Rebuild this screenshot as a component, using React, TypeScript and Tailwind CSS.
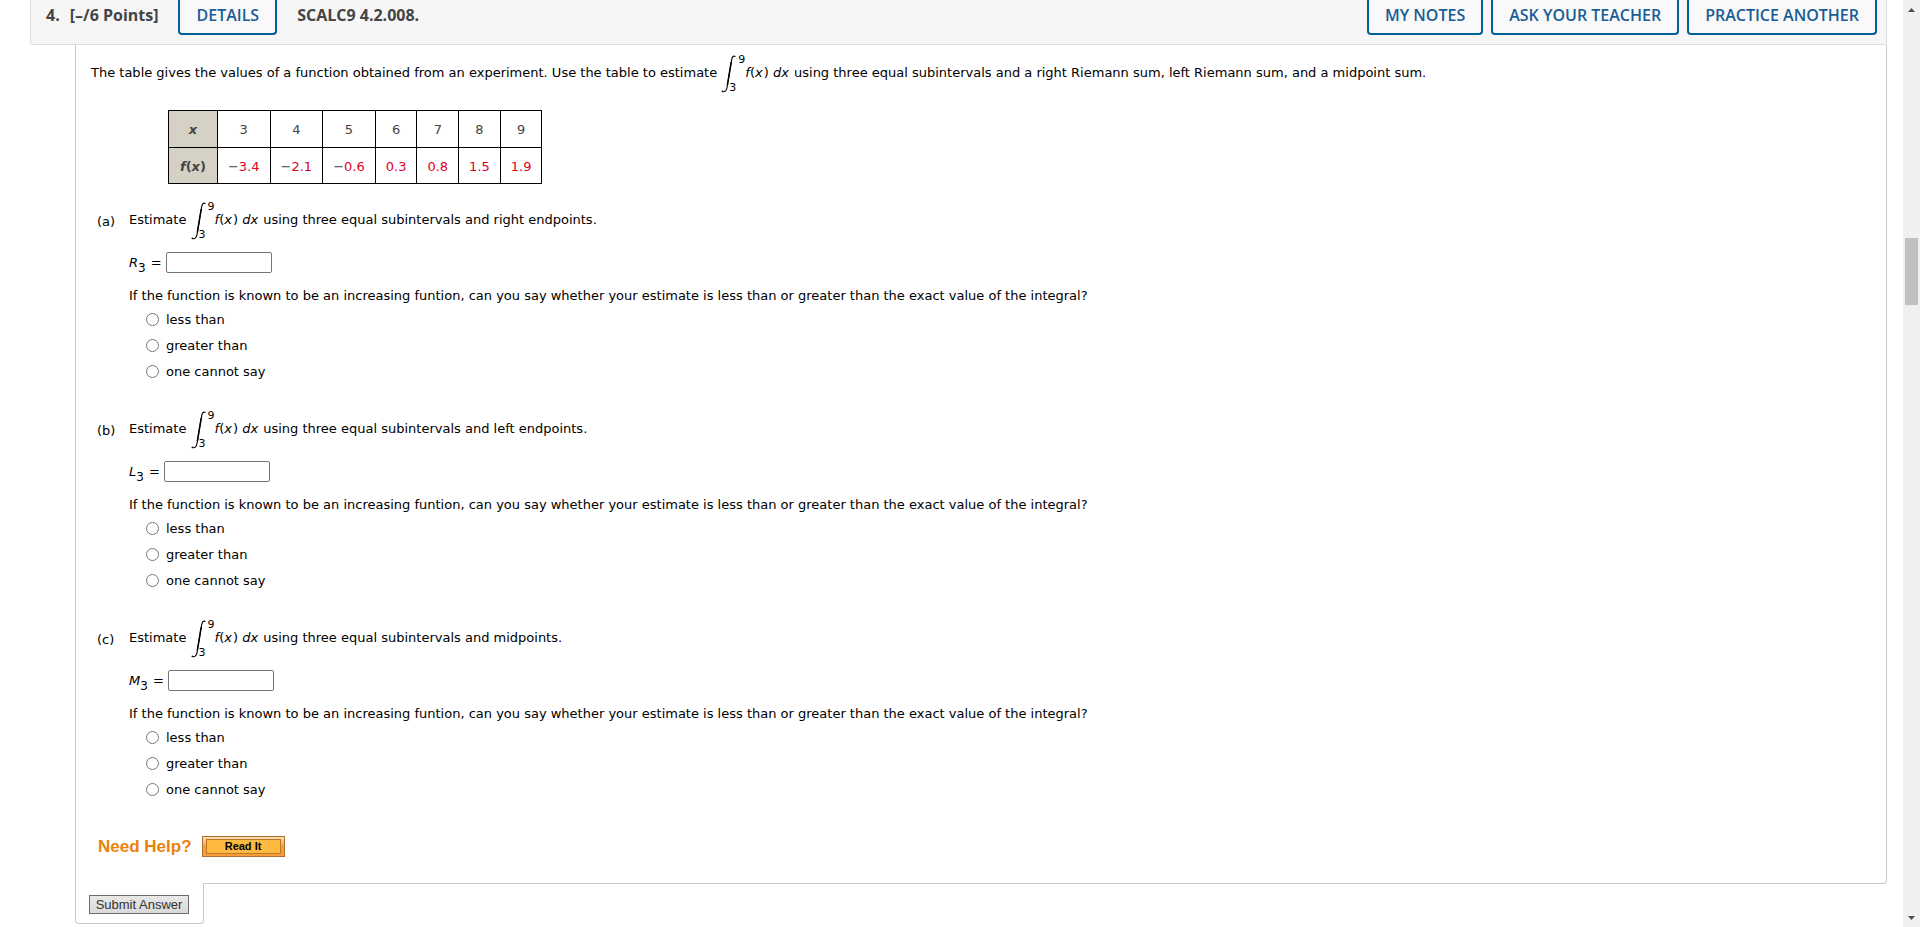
interface Part {
  id: string;
  symbol: string;
  method: string;
}

const PARTS: Part[] = [
  { id: 'a', symbol: 'R', method: 'right endpoints' },
  { id: 'b', symbol: 'L', method: 'left endpoints' },
  { id: 'c', symbol: 'M', method: 'midpoints' },
];

const CHOICES = ['less than', 'greater than', 'one cannot say'];

const DATA = [
  { x: 3, fx: -3.4 },
  { x: 4, fx: -2.1 },
  { x: 5, fx: -0.6 },
  { x: 6, fx: 0.3 },
  { x: 7, fx: 0.8 },
  { x: 8, fx: 1.5 },
  { x: 9, fx: 1.9 },
];

const OUTLINE_BUTTON =
  'h-[35px] rounded-b border-2 border-t-0 border-[#006298] bg-[#f9f9f9] px-4 pb-1 text-base leading-6 font-semibold text-[#1a5c96]';

function Integral() {
  return (
    <span className="inline-flex h-10 items-end align-middle">
      <svg width="15" height="38" viewBox="0 0 15 38" fill="none" aria-hidden="true">
        <path d="M14.5 1.6C12.6.4 11.3 1.6 10.7 4.6L6 32.6C5.4 36 3.6 37.4 1 36.4" stroke="#000" strokeWidth="1.1" />
        <path d="M10.2 7L6.4 30" stroke="#000" strokeWidth="1.5" />
        <circle cx="1.3" cy="36.2" r=".8" fill="#000" />
      </svg>
      <span className="flex h-10 w-[9px] flex-col justify-between pt-px text-[11px] leading-[11px]">
        <span className="pl-0.5">9</span>
        <span className="-ml-[7px]">3</span>
      </span>
    </span>
  );
}

function Integrand() {
  return (
    <>
      <Integral />
      <i>f</i>(<i className="mr-px">x</i>) <i className="mr-px">dx</i>
    </>
  );
}

function DataTable() {
  return (
    <table className="mt-[17px] ml-[77px] border-collapse text-center text-[13px] leading-4 text-[#444]">
      <tbody>
        <tr className="h-[37px]">
          <th scope="row" className="border border-black bg-[#d5d1c5] px-[11px] pt-0.5 italic">
            x
          </th>
          {DATA.map(({ x }) => (
            <td key={x} className="border border-black px-2.5 pt-0.5">
              {x}
            </td>
          ))}
        </tr>
        <tr className="h-9">
          <th scope="row" className="border border-black bg-[#d5d1c5] px-[11px] pt-0.5">
            <i>f</i>(<i>x</i>)
          </th>
          {DATA.map(({ x, fx }) => (
            <td key={x} className="border border-black px-2.5 pt-0.5">
              {fx < 0 && '−'}
              <span className="text-[#dd0022]">{Math.abs(fx)}</span>
            </td>
          ))}
        </tr>
      </tbody>
    </table>
  );
}

function Question({ id, symbol, method }: Part) {
  return (
    <li className="flex h-[209px]">
      <span className="w-8 pt-3.5">({id})</span>
      <div className="flex-1">
        <p className="h-10 leading-[38px]">
          Estimate <Integrand /> using three equal subintervals and {method}.
        </p>
        <div className="mt-3 flex h-[21px] items-center">
          <label htmlFor={`answer-${id}`} className="mr-1">
            <i>{symbol}</i>
            <sub className="-bottom-[5px] mr-px text-xs">3</sub> =
          </label>
          <input
            id={`answer-${id}`}
            type="text"
            className="h-[21px] w-[106px] rounded-xs border border-[#767676] bg-white px-1"
          />
        </div>
        <fieldset>
          <legend className="pt-[15px] pb-[3px]">
            If the function is known to be an increasing funtion, can you say whether your estimate is less than or
            greater than the exact value of the integral?
          </legend>
          {CHOICES.map((choice) => (
            <label key={choice} className="flex h-[26px] items-center">
              <input type="radio" name={`compare-${id}`} className="mr-[7px] mb-0.5 ml-[17px] size-[13px]" />
              {choice}
            </label>
          ))}
        </fieldset>
      </div>
    </li>
  );
}

function Scrollbar() {
  return (
    <div className="flex h-screen w-[17px] flex-col items-center bg-[#f0f0f0]" aria-hidden="true">
      <svg width="7" height="12" viewBox="0 0 7 12">
        <path d="M0 12L3.5 8L7 12Z" fill="#505050" />
      </svg>
      <div className="flex-[226]" />
      <div className="w-[13px] flex-[67] bg-[#c1c1c1]" />
      <div className="flex-[610]" />
      <svg width="7" height="12" viewBox="0 0 7 12">
        <path d="M0 1L3.5 5L7 1Z" fill="#505050" />
      </svg>
    </div>
  );
}

export default function App() {
  return (
    <div className="flex min-h-screen bg-white">
      <main className="min-w-0 flex-1 pr-4 pl-[30px]">
        <header className="flex h-[45px] items-start rounded-b-xs border border-t-0 border-[#ddd] bg-[#f6f6f6] pr-[9px] pl-[15px] font-['Open_Sans',sans-serif] text-base leading-[30px] font-bold text-[#444]">
          <span className="mr-2.5">4.</span>
          <span className="mr-5">[–/6 Points]</span>
          <button type="button" className={OUTLINE_BUTTON}>
            DETAILS
          </button>
          <span className="ml-5">SCALC9 4.2.008.</span>
          <div className="ml-auto flex gap-2">
            <button type="button" className={OUTLINE_BUTTON}>
              MY NOTES
            </button>
            <button type="button" className={OUTLINE_BUTTON}>
              ASK YOUR TEACHER
            </button>
            <button type="button" className={OUTLINE_BUTTON}>
              PRACTICE ANOTHER
            </button>
          </div>
        </header>

        <div className="ml-[45px] font-['DejaVu_Sans',sans-serif] text-[13px] leading-4 text-black">
          <section className="h-[839px] rounded-br border-x border-b border-[#c8c8c8] pt-2 pl-[15px]">
            <p className="h-10 leading-[38px]">
              The table gives the values of a function obtained from an experiment. Use the table to estimate{' '}
              <Integrand /> using three equal subintervals and a right Riemann sum, left Riemann sum, and a midpoint
              sum.
            </p>
            <DataTable />
            <ol className="mt-4 ml-1.5">
              {PARTS.map((part) => (
                <Question key={part.id} {...part} />
              ))}
            </ol>
            <div className="mt-[9px] ml-[7px] flex items-center gap-2.5 font-['Liberation_Sans',sans-serif] font-bold">
              <span className="text-[17px] leading-5 text-[#ea8208]">Need Help?</span>
              <button
                type="button"
                className="h-[21px] w-[83px] border border-[#b06f2c] bg-linear-to-b from-[#fde0b8] via-[#f89c35] to-[#f89c35] p-[2px] text-[11px] leading-[13px]"
              >
                <span className="mx-px block border border-[#b9782c] bg-[#fdb940]">Read It</span>
              </button>
            </div>
          </section>
          <div className="-mt-px h-[41px] w-[129px] rounded-b border border-t-0 border-[#c8c8c8] bg-white pt-3 pl-[13px]">
            <button
              type="button"
              className="block h-[19px] w-[100px] border border-[#6d6d6d] bg-linear-to-b from-[#e8e8e8] to-[#dadada] font-['Liberation_Sans',sans-serif] text-[13px] leading-[17px] text-[#333]"
            >
              Submit Answer
            </button>
          </div>
        </div>
      </main>
      <Scrollbar />
    </div>
  );
}
